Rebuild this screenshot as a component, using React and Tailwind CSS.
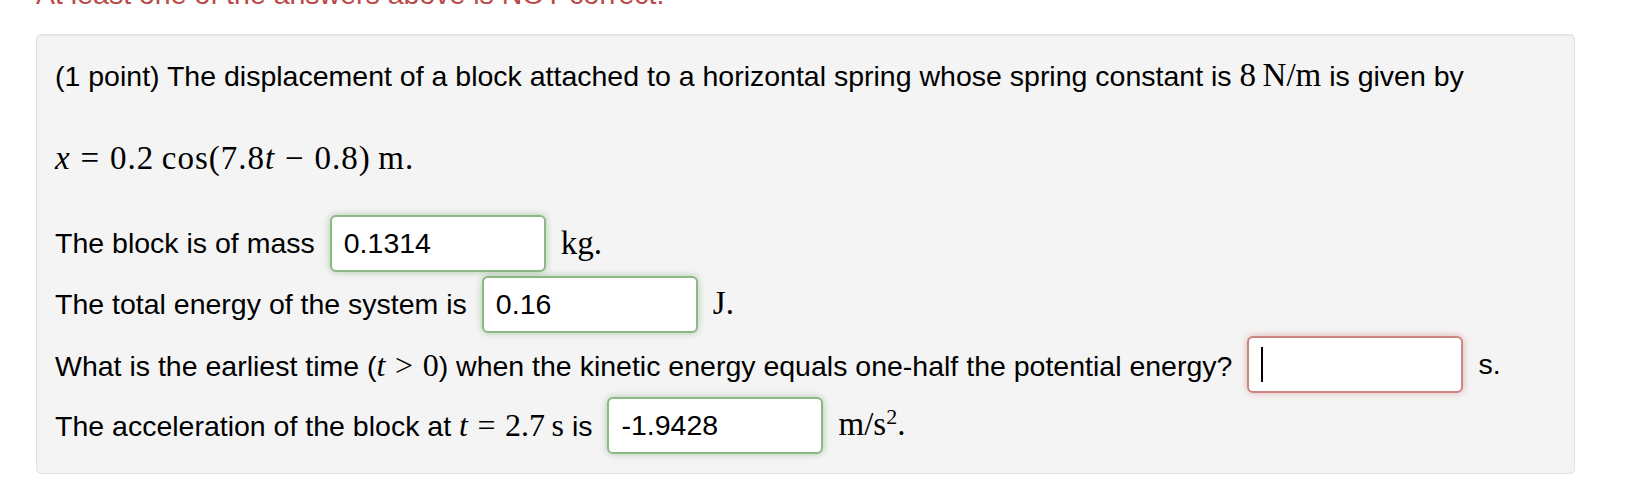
import React from 'react';

const serif = { fontFamily: '"Liberation Serif", "Times New Roman", serif' };

const M = ({ children, className = '' }) => (
  <span className={`font-['Liberation_Serif',serif] text-[32px] ${className}`}>{children}</span>
);

// relation / binary operator with TeX-like spacing
const Op = ({ children }) => <span className="mx-[0.3em]">{children}</span>;

const AnswerBox = ({ value, state = 'ok', caret = false }) => {
  const tone =
    state === 'bad'
      ? 'border-[#cd8580] shadow-[0_0_7px_rgba(185,74,72,0.4)]'
      : 'border-[#8db886] shadow-[0_0_7px_rgba(70,136,71,0.4)]';
  return (
    <div className={`relative flex h-[57px] w-[216px] shrink-0 items-center rounded-[6px] border-2 bg-white pl-[12px] ${tone}`}>
      {caret && <span className="h-[35px] w-[2px] bg-black" />}
      <span className="text-[28.5px] text-black">{value}</span>
    </div>
  );
};

const Row = ({ children }) => (
  <div className="flex h-[57px] items-center gap-[15px] whitespace-nowrap">{children}</div>
);

export default function App() {
  return (
    <div className="min-h-[504px] bg-white font-['Liberation_Sans',Arial,sans-serif] text-black">
      <div className="ml-[36px] mt-[-22px] h-[28px] overflow-hidden text-[28.5px] leading-[32px] text-[#b94a48]">
        At least one of the answers above is NOT correct.
      </div>
      <div className="ml-[36px] mt-[28px] w-[1539px] rounded-[5px] border border-[#e1e1e1] bg-[#f4f4f4] pb-[19px] pl-[18px] pt-[20px] shadow-[inset_0_1px_1px_rgba(0,0,0,0.05)]">
        <p className="whitespace-nowrap text-[28.5px] leading-[40px]">
          (1 point) The displacement of a block attached to a horizontal spring whose spring constant is{' '}
          <M className="text-[33px]">8&thinsp;N/m</M> is given by
        </p>
        <p className="mt-[42px] whitespace-nowrap leading-[40px]" style={serif}>
          <span className="text-[33px] tracking-[0.03em]">
            <i>x</i>
            <Op>=</Op>0.2&thinsp;cos(7.8<i>t</i>
            <Op>−</Op>0.8)&thinsp;m.
          </span>
        </p>
        <div className="mt-[31px] flex flex-col gap-[3.5px] text-[28.5px]">
          <Row>
            <span>The block is of mass</span>
            <AnswerBox value="0.1314" />
            <M className="text-[33px]">kg.</M>
          </Row>
          <Row>
            <span>The total energy of the system is</span>
            <AnswerBox value="0.16" />
            <M className="text-[33px]">J.</M>
          </Row>
          <Row>
            <span>
              What is the earliest time (<M><i>t</i><Op>&gt;</Op>0</M>) when the kinetic energy equals one-half the
              potential energy?
            </span>
            <AnswerBox value="" state="bad" caret />
            <span>s.</span>
          </Row>
          <Row>
            <span>
              The acceleration of the block at <M><i>t</i><Op>=</Op>2.7&thinsp;s</M> is
            </span>
            <AnswerBox value="-1.9428" />
            <M className="text-[33px]">
              m/s<sup className="top-[-0.5em] text-[22px]">2</sup>.
            </M>
          </Row>
        </div>
      </div>
    </div>
  );
}
